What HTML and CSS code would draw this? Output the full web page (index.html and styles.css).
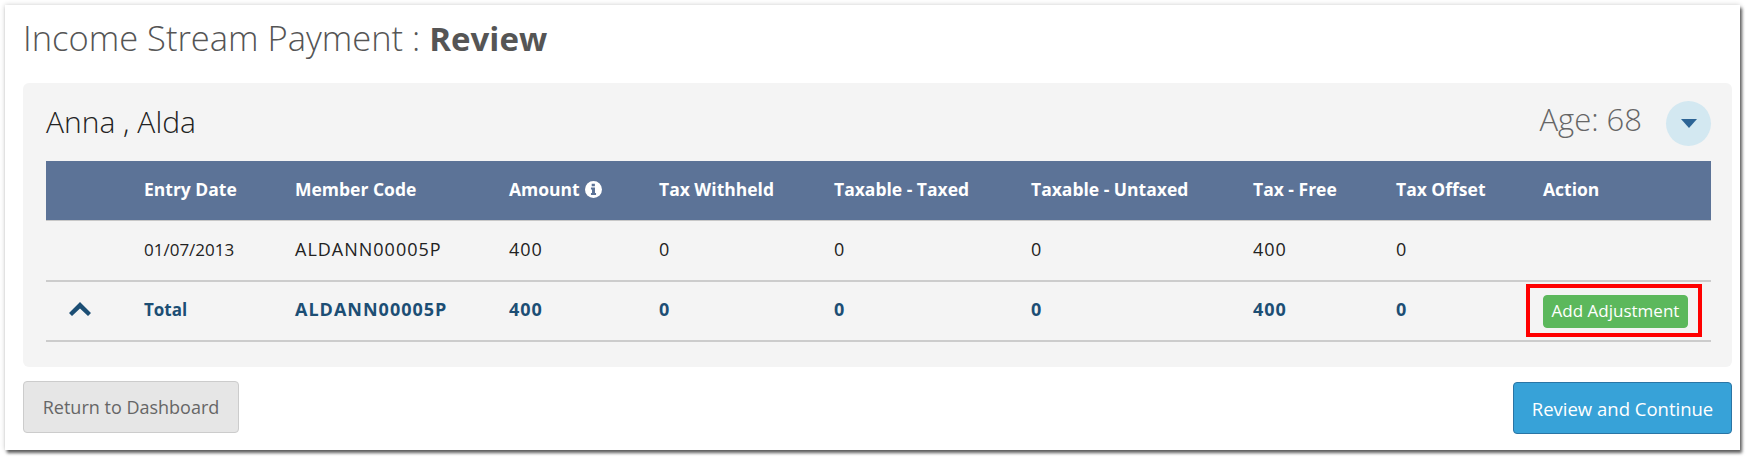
FILE: index.html
```html
<!DOCTYPE html>
<html lang="en">
  <head>
    <title>Income Stream Payment : Review</title>
    <meta charset="utf-8" />
    <link rel="stylesheet" href="styles.css">
  </head>
  <body>
    <div class="page">
      <h1 class="page-title">Income Stream Payment : <strong>Review</strong></h1>

      <div class="member-panel">
        <div class="member-head">
          <h2 class="member-name">Anna , Alda</h2>
          <span class="member-age">Age: 68</span>
          <button class="toggle" type="button">
            <svg width="16" height="9" viewBox="0 0 16 9"><path d="M0 0h16L8 9z" fill="#2c6495"/></svg>
          </button>
        </div>

        <table class="payments">
          <thead>
            <tr>
              <th class="col-toggle"></th>
              <th class="col-date">Entry Date</th>
              <th class="col-code">Member Code</th>
              <th class="col-amount">Amount
                <svg class="info" width="17" height="17" viewBox="0 0 16 16">
                  <circle cx="8" cy="8" r="8" fill="#fff"/>
                  <path d="M6.300 2.600h3v2.400h-3zM5.600 6.200h3.800v5.200h1v1.800H5.600v-1.800h1V8h-1z" fill="#5c7397"/>
                </svg>
              </th>
              <th class="col-withheld">Tax Withheld</th>
              <th class="col-taxed">Taxable - Taxed</th>
              <th class="col-untaxed">Taxable - Untaxed</th>
              <th class="col-free">Tax - Free</th>
              <th class="col-offset">Tax Offset</th>
              <th>Action</th>
            </tr>
          </thead>
          <tbody>
            <tr>
              <td></td>
              <td>01/07/2013</td>
              <td class="num">ALDANN00005P</td>
              <td class="num">400</td>
              <td class="num">0</td>
              <td class="num">0</td>
              <td class="num">0</td>
              <td class="num">400</td>
              <td class="num">0</td>
              <td></td>
            </tr>
            <tr class="total">
              <td class="chevron">
                <svg width="22" height="14" viewBox="0 0 22 14"><path d="M11 0 22 11l-3 3-8-7.500L3 14l-3-3z" fill="#1c4e74"/></svg>
              </td>
              <td>Total</td>
              <td class="num">ALDANN00005P</td>
              <td class="num">400</td>
              <td class="num">0</td>
              <td class="num">0</td>
              <td class="num">0</td>
              <td class="num">400</td>
              <td class="num">0</td>
              <td class="action"><button class="btn-add" type="button">Add Adjustment</button></td>
            </tr>
          </tbody>
        </table>
      </div>

      <div class="actions">
        <button class="btn btn-return" type="button">Return to Dashboard</button>
        <button class="btn btn-continue" type="button">Review and Continue</button>
      </div>
    </div>
  </body>
</html>
```

FILE: styles.css
```css
* {
  box-sizing: border-box;
}

body {
  margin: 0;
  min-height: 459px;
  padding: 5px 0 0 5px;
  background: #fff;
  font-family: "Open Sans", "Liberation Sans", sans-serif;
}

.page {
  width: 1735px;
  height: 445px;
  padding: 0 8px 0 18px;
  background: #fff;
  box-shadow: 0 0 5px rgba(0, 0, 0, 0.2), 2px 3px 3px rgba(0, 0, 0, 0.6);
}

.page-title {
  margin: 0;
  padding-top: 11px;
  height: 78px;
  font-size: 34.500px;
  line-height: 44px;
  font-weight: 300;
  color: #555;
}

.page-title strong {
  font-size: 33px;
  font-weight: 700;
}

.member-panel {
  height: 284px;
  padding: 0 21px 0 23px;
  background: #f4f4f4;
  border-radius: 6px;
}

.member-head {
  display: flex;
  align-items: flex-start;
  height: 78px;
  padding-top: 18px;
}

.member-name {
  flex: 1;
  margin: 0;
  padding-top: 1px;
  font-size: 30px;
  line-height: 40px;
  font-weight: 300;
  color: #222;
}

.member-age {
  margin-right: 24px;
  font-size: 31px;
  line-height: 36px;
  font-weight: 300;
  color: #666;
}

.toggle {
  width: 45px;
  height: 45px;
  padding: 0;
  border: 0;
  border-radius: 50%;
  background: #d3e8f1;
}

.payments {
  width: 100%;
  border-collapse: collapse;
  table-layout: fixed;
  font-size: 17px;
}

.payments th {
  height: 59px;
  padding: 0 0 2px;
  text-align: left;
  font-size: 17.500px;
  font-weight: 700;
  color: #fff;
  background: #5c7397;
  border-bottom: 1px solid #c8c8c8;
}

.payments td {
  height: 60px;
  padding: 0 0 2px;
  color: #222;
  border-bottom: 2px solid #ccc;
}

.payments .num {
  font-size: 18px;
  letter-spacing: 1px;
}

.payments tbody tr:first-child td {
  height: 61px;
}

.col-toggle { width: 98px; }
.col-date { width: 151px; }
.col-code { width: 214px; }
.col-amount { width: 150px; }
.col-withheld { width: 175px; }
.col-taxed { width: 197px; }
.col-untaxed { width: 222px; }
.col-free { width: 143px; }
.col-offset { width: 147px; }

.info {
  margin-left: 1px;
  vertical-align: -2px;
}

.payments .total td {
  padding-bottom: 4px;
  font-weight: 700;
  color: #1c4e74;
}

.payments .chevron {
  padding-left: 23px;
}

.payments .total .action {
  padding-bottom: 0;
}

.btn-add {
  position: relative;
  display: block;
  width: 145px;
  height: 33px;
  padding: 0 0 2px;
  border: 1px solid #5cb85c;
  border-radius: 4px;
  background: #5cb85c;
  color: #fff;
  font-family: inherit;
  font-size: 17px;
}

/* marked-up highlight round the button */
.btn-add::after {
  content: "";
  position: absolute;
  top: -12px;
  right: -15px;
  bottom: -10px;
  left: -18px;
  border: 4px solid #f00;
}

.actions {
  display: flex;
  justify-content: space-between;
  align-items: flex-start;
  padding-top: 14px;
}

.btn {
  height: 52px;
  padding: 0;
  border-radius: 4px;
  font-family: inherit;
  font-size: 18px;
}

.btn-return {
  width: 216px;
  border: 1px solid #ccc;
  background: #e6e6e6;
  color: #666;
}

.btn-continue {
  width: 219px;
  margin-top: 1px;
  border: 1px solid #2a75a5;
  background: #37a2d8;
  color: #fff;
  font-size: 18.500px;
}
```
